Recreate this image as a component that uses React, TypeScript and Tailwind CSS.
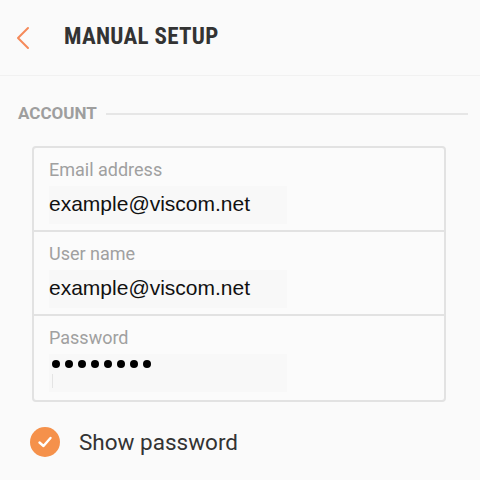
import React from 'react';

const rows = [
  { label: 'Email address', value: 'example@viscom.net' },
  { label: 'User name', value: 'example@viscom.net' },
  { label: 'Password', value: '', secret: true },
];

function Field({ label, value, secret, last }: { label: string; value: string; secret?: boolean; last?: boolean }) {
  return (
    <div className={`h-[84px] pl-[15px] pt-[12px] ${last ? 'h-[82px]' : 'border-b-2 border-[#e2e2e2]'}`}>
      <div className="text-[18px] leading-[20px] text-[#a0a0a0]" style={{ fontFamily: 'Roboto, sans-serif' }}>
        {label}
      </div>
      <div className="mt-[6px] h-[38px] w-[238px] bg-[#f8f8f8]">
        {secret ? (
          <div className="flex gap-[5px] pl-[3px] pt-[6px]">
            {Array.from({ length: 8 }).map((_, i) => (
              <span key={i} className="block h-[8px] w-[8px] rounded-full bg-black" />
            ))}
          </div>
        ) : (
          <div className="pt-[3px] text-[21px] leading-[30px] text-[#111]" style={{ fontFamily: '"Liberation Sans", Arial, sans-serif' }}>
            {value}
          </div>
        )}
        {secret && <div className="ml-[3px] mt-[6px] h-[14px] w-[1px] bg-[#e4e4e4]" />}
      </div>
    </div>
  );
}

export default function App() {
  return (
    <div className="h-[480px] w-[480px] overflow-hidden bg-[#fafafa]" style={{ fontFamily: 'Roboto, sans-serif' }}>
      <div className="flex h-[76px] items-center border-b border-[#f1f1f1]">
        <svg className="ml-[15px]" width="16" height="24" viewBox="0 0 16 24" fill="none">
          <path d="M13 2 L3 12 L13 22" stroke="#f58a5a" strokeWidth="2" strokeLinecap="round" strokeLinejoin="round" />
        </svg>
        <h1 className="ml-[33px] text-[23px] font-bold tracking-[0.3px] text-[#333]" style={{ fontFamily: '"Roboto Condensed", Roboto, sans-serif' }}>
          MANUAL SETUP
        </h1>
      </div>

      <div className="mt-[25px] flex items-center pl-[18px] pr-[12px]">
        <span className="text-[17px] font-bold text-[#9e9e9e]">ACCOUNT</span>
        <div className="ml-[9px] h-[2px] flex-1 bg-[#e6e6e6]" />
      </div>

      <div className="ml-[32px] mt-[19px] w-[414px] rounded-[4px] border-2 border-[#e2e2e2] bg-[#fbfbfb]">
        {rows.map((r, i) => (
          <Field key={r.label} label={r.label} value={r.value} secret={r.secret} last={i === rows.length - 1} />
        ))}
      </div>

      <div className="mt-[25px] flex items-center pl-[30px]">
        <span className="flex h-[30px] w-[30px] items-center justify-center rounded-full bg-[#f5914b]">
          <svg width="18" height="18" viewBox="0 0 18 18" fill="none">
            <path d="M3.5 9.5 L7.5 13 L14.5 5" stroke="white" strokeWidth="2.4" strokeLinecap="round" strokeLinejoin="round" />
          </svg>
        </span>
        <span className="ml-[19px] text-[22.5px] leading-[28px] text-[#333]">Show password</span>
      </div>
    </div>
  );
}
